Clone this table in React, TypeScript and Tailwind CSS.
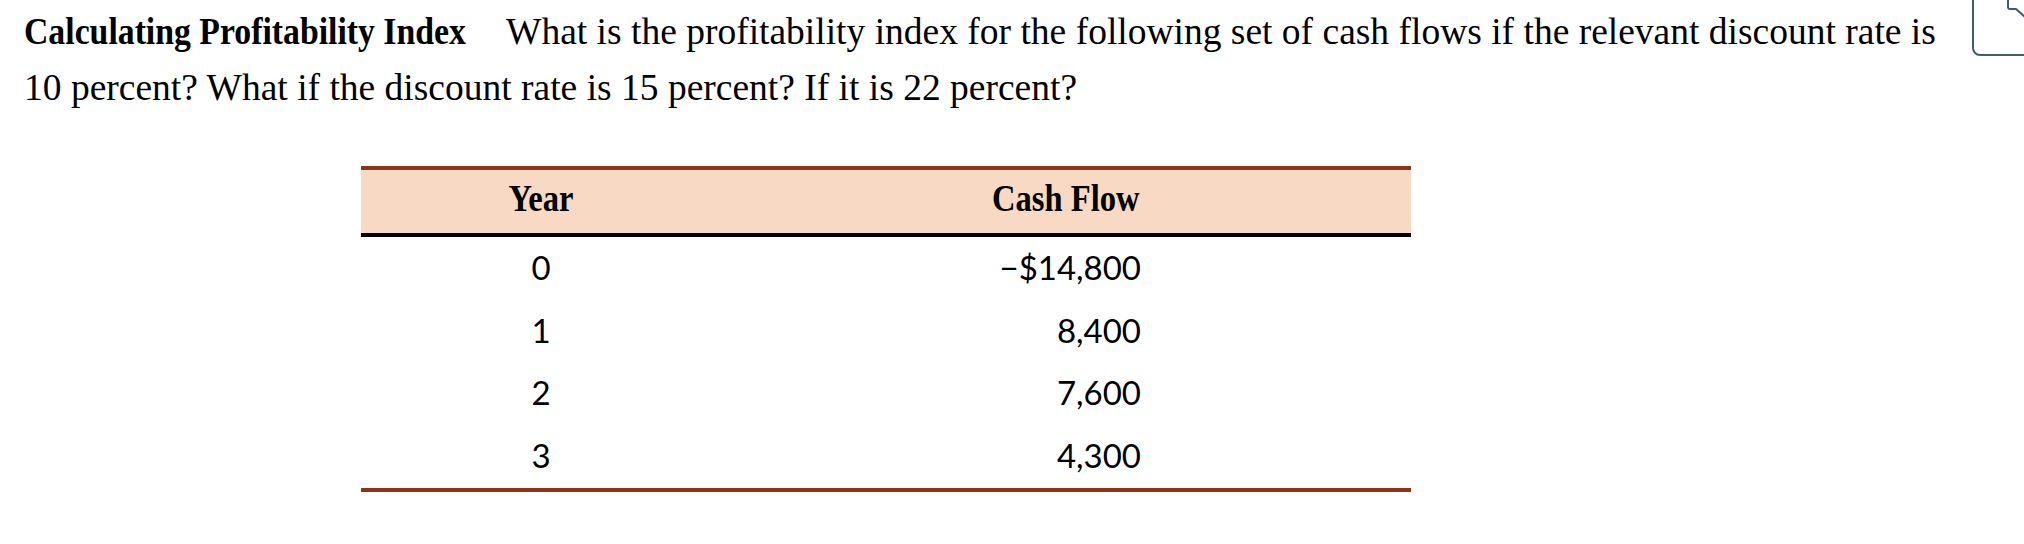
const rows = [
  { year: "0", cash: "−$14,800" },
  { year: "1", cash: "8,400" },
  { year: "2", cash: "7,600" },
  { year: "3", cash: "4,300" },
];

export default function App() {
  return (
    <div className="w-[2024px] h-[544px] overflow-hidden bg-white text-black font-['Liberation_Serif',serif]">
      <div className="flex items-start pl-[24px]">
        <p className="flex-1 pt-[4px] text-[37.5px] leading-[56px]">
          <span className="inline-block origin-left scale-x-[0.9] font-bold mr-[-9px]">Calculating Profitability Index</span>What is the profitability index for the following set of cash flows if the relevant discount rate is 10 percent? What if the discount rate is 15 percent? If it is 22 percent?
        </p>
        <button className="relative shrink-0 ml-[20px] mr-[-12px] -mt-[12px] w-[64px] h-[68px] rounded-[8px] border-2 border-[#3f5d6a]">
          <svg className="absolute left-[-2px] top-[-2px] w-[64px] h-[68px]" viewBox="0 0 64 68" fill="none">
            <path d="M36 0 V19 Q36 21 38 21 H44 L54 30" stroke="#3f5d6a" strokeWidth="2" strokeLinejoin="round" />
          </svg>
        </button>
      </div>

      <div className="ml-[361px] mt-[50px] w-[1050px] border-t-4 border-b-4 border-[#8b3516]">
        <div className="grid grid-cols-[360px_1fr] h-[67px] bg-[#f7d9c4] border-b-4 border-black">
          <div className="flex items-center justify-center pb-[6px]">
            <span className="inline-block scale-x-[0.88] text-[37px] leading-none font-bold">Year</span>
          </div>
          <div className="flex items-center justify-center pb-[6px]">
            <span className="inline-block scale-x-[0.88] text-[37px] leading-none font-bold">Cash Flow</span>
          </div>
        </div>
        {rows.map((r) => (
          <div key={r.year} className="grid grid-cols-[360px_1fr] h-[62.75px] font-['Lato',sans-serif] text-[33px] leading-none">
            <div className="flex items-center justify-center pb-[2px]">{r.year}</div>
            <div className="flex items-center justify-center pb-[2px]">
              <div className="w-[160px] mr-[10px] text-right">{r.cash}</div>
            </div>
          </div>
        ))}
      </div>
    </div>
  );
}
